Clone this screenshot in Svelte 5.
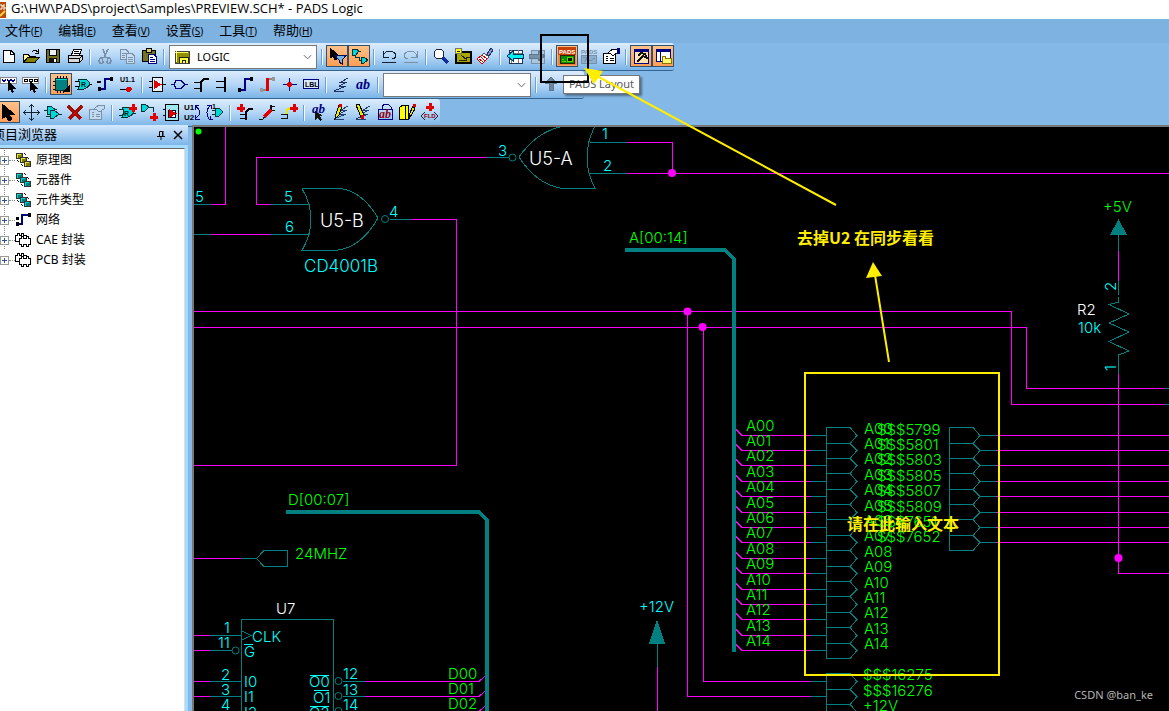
<script>
  const navy = '#000080';
  const teal = '#008080';
  const aqua = '#00d8d8';
  const red = '#e00000';
  const grey = '#7890a8';

  // Shared glyph pieces, all on a 22x22 grid
  const cursor = 'M10 8V18L12 16L14 20L16 19L14.500 15.500H18Z';
  const gate = 'M6 6H12Q17 7 18 11Q16 15 12 16H6L8 11Z';
  const pencil = 'M5 18L6 13L9 4L12 5L9 14Z';
  const plusSmall = 'M13 7H21M17 3V11';
  const slopes = 'M18 5L11 9H17L9 13H16L4 18H14';

  // Each shape is [path, fill, stroke, width] or { text, x, y, size, color }
  const icons = {
    new: [['M5.500 5.500H13L16.500 9V17.500H5.500Z', '#fff', '#000'], ['M12.500 5.500V9.500H16.500', 'none', '#000']],
    open: [['M3.500 17V9.500H8L9.500 11H15V13', '#fff899', '#000'], ['M3.500 17.500L7.500 12.500H19L15 17.500Z', '#808000', '#000'], ['M12 7Q15 3 17.500 7M18 4V8H15', 'none', '#000']],
    save: [['M4.500 4.500H17.500V17.500H4.500Z', '#707020', '#000'], ['M7.500 4.500H14.500V10.500H7.500Z', '#e8f0f8', '#000'], ['M7 13H15V18H7Z', '#111', 'none'], ['M12 14H14V17H12Z', '#fff', 'none']],
    print: [['M7.500 10L9.500 4.500H17.500L15.500 10Z', '#fff', '#000'], ['M4.500 10.500H18.500V14.500L15.500 17.500H4.500Z', '#d8d8d8', '#000'], ['M10 6.500H15M9.500 8.500H14.500M4.500 13.500H15.500M15.500 17.500V13.500L18.500 10.500', 'none', '#000']],
    cut: [['M9 4L12 13M14 4L10 13', 'none', grey, 1.5], ['M8 13A2 3 0 1 0 9 17ZM14 13A2 3 0 1 1 13 17Z', 'none', grey, 1.5]],
    copy: [['M4.500 4.500H10L12.500 7V14.500H4.500Z', '#c6def4', grey], ['M10.500 8.500H16L18.500 11V18.500H10.500Z', '#c6def4', grey], ['M6 8.500H10M6 10.500H9M6 12.500H9M12 12.500H17M12 14.500H17M12 16.500H17', 'none', grey]],
    paste: [['M4.500 5.500H17.500V16.500H4.500Z', '#747424', '#000'], ['M8.500 3.500H13.500V7.500H8.500Z', '#d8c860', '#000'], ['M10.500 9.500H16L18.500 12V18.500H10.500Z', '#fff', navy], ['M12 12.500H15M12 14.500H17M12 16.500H17', 'none', navy]],
    board: [['M4 5H18V17H4Z', '#909000', '#404040'], ['M4 6H17M5 5V16', 'none', '#ffff60'], ['M8 17V11H17V17M11 17V14H14V17', '#ffff40', '#222']],
    filter: [['M4 3V13L7 11L9 15L11 14L9 10H12Z', '#000', '#000'], ['M9 10.500H20L16 15V19L13 17V15Z', '#78b0e8', '#001050']],
    gates: [['M4 4H8L11 6L8 10H4Z', aqua, '#033'], ['M13 12H16L20 15L16 18H13Z', aqua, '#033'], ['M7 10V12.500H11V15H13M11 6.500H13', 'none', '#033']],
    undo: [['M5 6V12H11M5 12Q6 6 12 6Q18 7 18 11Q17 14 14 14', 'none', '#123'], ['M4 17.500H18', 'none', '#123']],
    redo: [['M17 6V12H11M17 12Q16 6 10 6Q4 7 4 11Q5 14 8 14', 'none', grey], ['M4 17.500H18', 'none', grey]],
    magnify: [['M9 4A5 5 0 1 1 9 14A5 5 0 1 1 9 4Z', '#fff', '#223'], ['M13 13L18 18', 'none', '#1030a0', 3]],
    boardZoom: [['M4 6.500H19V18H4Z', '#a8a800', '#000', 2], ['M7 15H14V12H18M9 10L15 15', 'none', '#222'], ['M3.500 3.500H9.500V8.500H3.500Z', '#ffff00', '#777'], ['M5 6H8', 'none', '#222']],
    brush: [['M13 9L17 3L19 5L15 11Z', '#9099c8', '#203070'], ['M10 8L15 12L13 14L8 10Z', '#fff', '#555'], ['M8 10L3 14L8 19L13 14Z', '#fff', red], ['M5.500 14L9 17M7 12L11 16', 'none', red]],
    importLeft: [['M5.500 5.500H18.500V18.500H5.500Z', '#fff', '#235'], ['M5 8.500H18M7.500 5V18M14.500 5V18', 'none', '#777'], ['M3 11L9 6V9H19V13H9V16Z', '#00f0f0', '#013060']],
    exportRight: [['M5.500 5.500H18.500V18.500H5.500Z', '#a9c6df', grey], ['M3 9H12V6L19 11L12 16V13H3Z', grey, '#60788e']],
    pads: [['M2 2H20V20H2Z', '#f08040', 'none'], ['M2 2H20V10H2Z', '#c84000', 'none'], ['M4.500 10.500H18.500V18.500H4.500Z', '#009000', '#302000'], ['M6 14H8M6 16.500H10M11 12H16V16H11Z', '#111', '#60d000'], { text: 'PADS', x: 3, y: 9, size: 6, color: '#fff' }],
    padsOff: [['M3.500 10.500H18.500V18.500H3.500Z', '#8aafd2', grey], ['M5 13L8 12L12 16L17 13M6 17L10 12', 'none', grey], { text: 'PADS', x: 3, y: 9, size: 6, color: grey }],
    props: [['M3.500 8.500H15.500V18.500H3.500Z', '#fff', '#000'], ['M6 11.500H8M6 13.500H8M6 15.500H8M10 13.500H14M10 15.500H14', 'none', '#000'], ['M8 8L12 4.500H17V8L13 11L11 9Z', '#fff', '#000'], ['M17 3H20V9H17Z', navy, 'none']],
    propsOff: [['M3.500 8.500H15.500V18.500H3.500Z', '#c2dbf1', grey], ['M6 11.500H8M6 13.500H8M6 15.500H8M10 13.500H14M10 15.500H14', 'none', grey], ['M8 8L12 4.500H18V8L13 11L11 9Z', '#c2dbf1', grey]],
    hammer: [['M4.500 4.500H18.500V18.500H4.500Z', '#ffe2ad', navy], ['M4 5.500H19', 'none', navy, 3], ['M8 11L11 8L15 9L17 13L13 11L7 17', 'none', '#111', 2]],
    explorer: [['M4.500 4.500H18.500V16.500H4.500Z', '#fff', navy], ['M4 5.500H19', 'none', navy, 3], ['M8.500 5V17', 'none', navy], ['M10.500 11.500H13L14 13.500H19.500V18.500H10.500Z', '#ffff70', '#907000']],
    selectNets: [['M2.500 4.500H18.500V10.500H2.500Z', '#fff', '#888'], ['M4 6L6 9L8 6M9 6L11 9L13 6M13 6L15 9L17 6', 'none', navy], [cursor, '#000', 'none']],
    selectParts: [['M2.500 4.500H18.500V10.500H2.500Z', '#fff', '#888'], ['M4.500 6.500H7.500V8.500H4.500ZM9.500 6.500H12.500V8.500H9.500ZM14.500 6.500H17.500V8.500H14.500Z', 'none', '#000'], [cursor, '#000', 'none']],
    chip: [['M5.500 5.500H17.500V17.500H5.500Z', teal, '#033'], ['M6 6.500H17', 'none', aqua], ['M7.500 5V3M10.500 5V3M13.500 5V3M16.500 5V3M7.500 20V18M10.500 20V18M13.500 20V18M5 8.500H3M5 12.500H3M5 16.500H3', 'none', '#000'], ['M17 18H14L19 13V18Z', '#000', '#000']],
    gateR: [[gate, aqua, '#003030'], ['M3 8.500H7M3 13.500H7M18 11.500H20', 'none', '#000'], { text: 'R', x: 9, y: 14, size: 7, color: '#002020' }],
    net: [['M3 9H7M5 16H11V6H17', 'none', navy, 2], ['M5 14V18M17 4V8M4 8V10', 'none', '#000', 3]],
    pinNumber: [{ text: 'U1.1', x: 4, y: 9, size: 7, color: '#000' }, ['M4 16.500H12', 'none', '#000'], ['M11 14H14L15.500 15.500V17L14 19H11L10 17V15Z', red, 'none']],
    part: [['M6.500 4.500H16.500V18.500H6.500Z', '#e4f0fc', '#000'], ['M3 8.500H7M3 14.500H7M16 11.500H20M9 4.500H14', 'none', '#000'], ['M8 7L16 11.500L8 16Z', red, 'none']],
    port: [['M3 11.500H6L8 7.500H13L17 11.500L13 15.500H8L6 11.500M17 11.500H20', 'none', navy]],
    bus: [['M4 9.500H11M4 15.500H11', 'none', '#000'], ['M11 19V9L14 6H19', 'none', '#000', 2]],
    busTap: [['M4 8.500H12M4 14.500H12', 'none', '#000'], ['M13 4V19', 'none', '#000', 2]],
    segment: [['M5 17H11V6H17', 'none', navy, 2], ['M5 15V19M17 4V8', 'none', '#000', 3]],
    segmentRed: [['M4 17H10M12 6H17', 'none', '#888', 2], ['M11 5V18', 'none', red, 3], ['M5 15V19M17 4V8', 'none', '#999', 3]],
    junction: [['M5 11.500H19M11.500 5V18', 'none', navy], ['M10 9H13V14H10ZM9 10H14V13H9Z', red, 'none']],
    label: [['M3.500 6.500H18.500V15.500H3.500Z', '#d8eafa', navy], { text: 'LBL', x: 5, y: 14, size: 7, color: '#000' }],
    line: [[slopes, 'none', '#203060']],
    ab: [{ text: 'ab', x: 4, y: 16, size: 14, color: navy, serif: true }],
    up: [['M9 17V10H6L11 4L16 10H13V17Z', '#71869b', '#60788c']],
    arrow: [['M4 3V18L8 15L11 20L14 18L11 13H16Z', '#000', '#000']],
    move: [['M11.500 4V19M4 11.500H19', 'none', '#123'], ['M9 6L11.500 3.500L14 6M9 17L11.500 19.500L14 17M6 9L3.500 11.500L6 14M17 9L19.500 11.500L17 14', 'none', '#123']],
    dupGate: [['M5 5H8L13 8L9 13H5Z', aqua, '#033'], ['M8 9H12L17 13L12 17H8Z', aqua, '#033'], ['M2 9.500H5M4 15.500H8M13 8.500H15M17 13.500H20', 'none', '#033']],
    remove: [['M4 5L17 18M18 5L5 18', 'none', '#921000', 3], ['M4 5L17 18M18 5L5 18', 'none', red]],
    addPart: [[gate, aqua, '#033'], ['M3 8.500H7M3 14.500H7M18 12.500H20', 'none', '#033'], [plusSmall, 'none', red, 3], { text: 'R', x: 8, y: 15, size: 7, color: '#022' }],
    addNet: [['M3 3H7L11 6L7 10H3Z', aqua, '#033'], ['M11 6.500H15.500V11', 'none', '#033'], ['M12 16H20M16 12V20', 'none', red, 3]],
    swapPart: [['M5.500 3.500H18.500V19.500H5.500Z', '#9ee9ed', '#000'], ['M3 8.500H6M3 14.500H6M8.500 9.500H15.500V16.500H8.500Z', '#fff', '#003'], ['M9 8L17 12.500L9 17Z', red, 'none']],
    swapRef: [{ text: 'U1', x: 2, y: 9, size: 8, color: '#000' }, { text: 'U2', x: 2, y: 19, size: 8, color: '#000' }, ['M13 5Q19 8 17 14L13 18M13 9V4H17M13 14V18H18', 'none', navy]],
    swapPin: [['M7 4Q0 10 5 18M3 4H7V8M5 18H9M6 15V18', 'none', navy], ['M11 7H15L19 11L15 15H11Z', aqua, '#033'], ['M8 9.500H11M8 13.500H11', 'none', '#033'], { text: '1', x: 8, y: 8, size: 7, color: '#000' }],
    addBus: [['M3 7H11M7 3V11', 'none', red, 3], ['M6 13.500H11M6 17.500H12', 'none', '#000'], ['M12 19V11L15 8H19', 'none', '#000', 2]],
    cutBus: [['M3 18H7L9 15M14 9L15 4V11M15 5H19M15 9H19', 'none', '#111'], ['M8 16L15 9', 'none', red, 3]],
    splitBus: [['M3 13.500H9M3 17.500H9V13', 'none', '#111'], ['M9 13V9L12 7H15', 'none', '#e8e800', 2], ['M12 7H20M16 3V11', 'none', red, 3]],
    abCursor: [{ text: 'ab', x: 4, y: 12, size: 13, color: navy, serif: true }, ['M7 10V19L10 17L12 20L14 19L12 15H15Z', '#111', 'none']],
    drawPencil: [[slopes, 'none', '#20406c'], [pencil, '#e8e800', '#000'], ['M9 3H12V6H9Z', red, 'none']],
    editPencil: [[slopes, 'none', '#20406c'], ['M4 4L7 3L12 14L9 16Z', '#e8e800', '#000'], ['M9 14H12V18H9Z', red, 'none']],
    lockText: [['M8 9V5L11 3H14L17 6V9M4.500 8.500H18.500V18.500H4.500Z', 'none', navy], { text: 'ab', x: 5, y: 17, size: 12, color: '#900010', serif: true }],
    library: [['M3.500 6.500L6 4.500H9.500V18.500H3.500Z', '#ffff00', '#000'], ['M9.500 4.500H12.500V18.500H9.500Z', '#ffff00', '#000'], ['M17 5L13 14V18L19 8Z', '#e8e800', '#000'], ['M17 3H20V6H17Z', red, 'none']],
    field: [['M8 6H16M12 2V10', 'none', red, 3], ['M7 11L3 15L7 19M16 11L20 15L16 19', 'none', '#302020'], { text: 'FLD', x: 6, y: 17, size: 6, color: '#900010' }]
  };

  const standardBar = ['new', 'open', 'save', 'print', '|', 'cut', 'copy', 'paste', '|', 'layers', '|', 'filter*', 'gates*', '|',
    'undo', 'redo', '|', 'magnify', 'boardZoom', 'brush', '|', 'importLeft', 'exportRight', '|', 'pads*', 'padsOff', 'props', '|', 'hammer*', 'explorer*'];
  const filterBar = ['selectNets', 'selectParts', '|', 'chip*', 'gateR', 'net', 'pinNumber', '|', 'part', 'port', 'bus', 'busTap',
    'segment', 'segmentRed', 'junction', 'label', '|', 'line', 'ab', '|', 'find', '|', 'up', 'blank'];
  const editBar = ['arrow*', 'move', 'dupGate', 'remove', 'propsOff', '|', 'addPart', 'addNet', 'swapPart', 'swapRef', 'swapPin', '|',
    'addBus', 'cutBus', 'splitBus', '|', 'abCursor', 'drawPencil', 'editPencil', 'lockText', 'library', 'field'];

  const menus = [['文件', 'F'], ['编辑', 'E'], ['查看', 'V'], ['设置', 'S'], ['工具', 'T'], ['帮助', 'H']];

  const sheet = 'M1.500 1.500H7.500V6.500H1.500Z';
  const tree = [
    { name: '原理图', color: '#808000', light: '#e8e840' },
    { name: '元器件', color: teal, light: aqua },
    { name: '元件类型', color: teal, light: aqua },
    { name: '网络', net: true },
    { name: 'CAE 封装', outline: true },
    { name: 'PCB 封装', outline: true }
  ];

  // Address lines share one pitch on both connectors
  const pitch = 15.38;
  const rowY = (i) => Math.floor(435.2 + i * pitch) + 0.5;
  const topY = (i) => Math.floor(427.7 + i * pitch) + 0.5;
  const address = Array.from({ length: 15 }, (_, i) => ({ y: rowY(i), label: 'A' + String(i).padStart(2, '0') }));
  const nets = ['5799', '5801', '5803', '5805', '5807', '5809', '7651', '7652'];
  const tab = (x, i) => `M${x + 0.5} ${topY(i + 1)}V${topY(i)}H${x + 24}L${x + 31} ${rowY(i)}L${x + 24} ${topY(i + 1)}H${x}`;

  const wires = [
    'M225.5 127V204.5H211', 'M211 234.5H271', 'M487 157.5H256.5V204.5H271',
    'M411 219.5H456.5V465.5H194', 'M194 311.5H1011.5V404.5H1165', 'M194 327.5H1026.5V388.5H1165',
    'M627 142.5H672.5V173.5', 'M627 173.5H3000', 'M687.5 311V696.5H811', 'M703.5 327V681.5H811',
    'M194 558.5H241', 'M194 635.5H210', 'M194 650.5H210', 'M194 681.5H210', 'M194 696.5H210',
    'M365 681.5H479L485 676', 'M365 696.5H479L485 691', 'M365 711.5H479L485 706',
    'M1118.5 251V281', 'M1118.5 374V573.5H3000', 'M657.5 667V3000'
  ];

  const parts = [
    'M194 204.5H211M194 234.5H211M271 204.5H310M271 234.5H310',
    'M302 188.5H340Q362 191 378 218Q362 247 336 250.5H302Q320 219 302 188.5',
    'M390 219.5H411M487 157.5H509',
    'M565 126Q538 130 519 157Q536 184 562 188.5H595Q579 157 595 126M590 142.5H627M590 173.5H627',
    'M241 558.5H256.5L264 550.5H287.5V566.5H264L256.5 558.5',
    'M241.5 3000V619.5H333.5V3000M210 635.5H241M210 650.5H232M210 681.5H241M210 696.5H241M242 631L251 635.5L242 640',
    'M343 681.5H365M343 696.5H365M343 711.5H365',
    'M1118.5 235V251M1118.5 281V295M1118.5 297V302L1109 304.5L1129 314L1109 323L1129 332L1109 341.5L1129 351L1118.5 355V374',
    'M657.5 643V667M811 681.5H826M811 696.5H826M1165 388.5H1169M1165 404.5H1169',
    'M826.5 3000V673.5H850L857 681.5L850 689.5H826M850 689.5L857 696.5L850 704.5H826M850 704.5L857 712'
  ];
  // Inverting pins
  const bubbles = [[385, 219], [512.5, 157.5], [235.5, 650.5], [338.5, 681], [338.5, 696], [338.5, 711]];

  const cyanText = [
    ['5', 195, 202], ['5', 284, 202], ['6', 285, 232], ['4', 389, 217], ['3', 498, 156], ['1', 602, 139], ['2', 603, 171],
    ['1', 224, 633], ['11', 218, 648], ['2', 221, 680], ['3', 221, 695], ['4', 221, 710],
    ['CLK', 252, 642], ['G', 244, 657], ['I0', 244, 687], ['I1', 244, 702], ['I2', 244, 718],
    ['O0', 309, 687], ['O1', 313, 703], ['O2', 309, 718], ['12', 343, 679], ['13', 343, 695], ['14', 343, 710],
    ['10k', 1078, 333], ['+12V', 639, 612]
  ];
  const greenText = [
    ['A[00:14]', 629, 243], ['D[00:07]', 288, 505], ['24MHZ', 295, 559], ['D00', 448, 679], ['D01', 448, 694], ['D02', 448, 709],
    ['+5V', 1103, 212], ['$$$16275', 863, 680], ['$$$16276', 863, 696], ['+12V', 863, 711]
  ];
  const dots = [[672, 173], [687.5, 311.5], [702.5, 327], [1118.5, 558]];

  let layer = 'LOGIC';
  let query = '';
</script>

{#snippet icon(name)}
  <svg class="icon" viewBox="0 0 22 22" aria-hidden="true">
    {#each icons[name] ?? [] as shape}
      {#if shape.text}
        <text class:serif={shape.serif} x={shape.x} y={shape.y} font-size={shape.size} fill={shape.color}>{shape.text}</text>
      {:else}
        <path d={shape[0]} fill={shape[1]} stroke={shape[2]} stroke-width={shape[3] ?? 1} />
      {/if}
    {/each}
  </svg>
{/snippet}

{#snippet chevron()}
  <svg class="chevron" viewBox="0 0 10 6" aria-hidden="true"><path d="M1 1L5 5L9 1" /></svg>
{/snippet}

{#snippet toolbar(items, label)}
  <div class="bar-row">
    <div class="bar" role="toolbar" aria-label={label}>
      {#each items as item}
        {#if item === '|'}
          <span class="sep"></span>
        {:else if item === 'layers'}
          <div class="combo with-icon">
            {@render icon('board')}
            <select bind:value={layer} aria-label="Layer">
              <option>LOGIC</option>
            </select>
            {@render chevron()}
          </div>
        {:else if item === 'find'}
          <div class="combo">
            <input type="text" bind:value={query} aria-label="Find" />
            {@render chevron()}
          </div>
        {:else}
          <button class="tool" class:active={item.endsWith('*')} aria-label={item.replace('*', '')}>
            {@render icon(item.replace('*', ''))}
          </button>
        {/if}
      {/each}
    </div>
  </div>
{/snippet}

<div class="app">
  <header class="title">
    <svg class="logo" viewBox="0 0 7 16" aria-hidden="true">
      <path d="M0 0H6V16H0Z" fill="#b84a08" />
      <path d="M0 3H2V7H0M5 3H3V5H5V7H3" stroke="#fff" fill="none" />
      <path d="M0 14L5 9" stroke="#ffd040" stroke-width="2" />
    </svg>
    <span>G:\HW\PADS\project\Samples\PREVIEW.SCH* - PADS Logic</span>
  </header>

  <nav class="menu">
    {#each menus as [name, key]}
      <button>{name}<small>(<u>{key}</u>)</small></button>
    {/each}
  </nav>

  {@render toolbar(standardBar, 'Standard')}
  {@render toolbar(filterBar, 'Selection filter')}
  {@render toolbar(editBar, 'Schematic editing')}

  <main>
    <aside>
      <div class="panel-head">
        <h2>项目浏览器</h2>
        <button aria-label="Pin">
          <svg viewBox="0 0 10 10"><path d="M3.500 6V1.500H6.500V6M7 1V6M1 6.500H9M5 6V10" /></svg>
        </button>
        <button aria-label="Close">
          <svg viewBox="0 0 10 10"><path d="M1 1L9 9M9 1L1 9" stroke-width="1.500" /></svg>
        </button>
      </div>
      <ul class="tree">
        {#each tree as node}
          <li>
            <button class="expand" aria-label="Expand {node.name}">
              <svg viewBox="0 0 9 9"><path d="M2 4.500H7M4.500 2V7" /></svg>
            </button>
            <span class="dotted"></span>
            <svg class="node-icon" viewBox="0 0 16 16" aria-hidden="true">
              {#if node.net}
                <path d="M2 12H7V3H13" fill="none" stroke={navy} stroke-width="2" />
                <path d="M1 6H4M2 10V14M14 1V5" fill="none" stroke="#000" stroke-width="3" />
              {:else if node.outline}
                <path d="M0.500 9.500V3.500H2.500V1.500H4.500V3.500H6.500V1.500H8.500V3.500H11.500V5M0.500 9.500H4M4.500 12.500V6.500H6.500V4.500H8.500V6.500H11.500V4.500H13.500V6.500H15.500V12.500H13.500V14.500H11.500V12.500H8.500V14.500H6.500V12.500Z" fill="#fff" stroke="#000" />
              {:else}
                <g stroke="#333" fill={node.color}>
                  <path d={sheet} />
                  <path d={sheet} transform="translate(4 4)" />
                  <path d={sheet} transform="translate(8 8)" />
                </g>
                <path d="M2 2.500H6M6 6.500H10M10 10.500H14M2.500 2V6M6.500 6V10M10.500 10V14" stroke={node.light} fill="none" />
                <path d="M2 8L4 10M6 12L8 14M9 1L11 3M12 5L14 7" stroke="#111" stroke-dasharray="1 1" />
              {/if}
            </svg>
            {node.name}
          </li>
        {/each}
      </ul>
    </aside>

    <section class="canvas">
      <svg class="sheet" role="img" aria-label="Schematic">
        <!-- the drawing is stored in window coordinates -->
        <g transform="translate(-194 -127)">
          <g class="wire">
            {#each wires as d}<path {d} />{/each}
            {#each address as { y }}<path d="M736 {y - 6}L742 {y}H811" />{/each}
            {#each nets as _, i}<path d="M996 {rowY(i)}H3000" />{/each}
          </g>
          <g class="part">
            {#each parts as d}<path {d} />{/each}
            {#each address as { y }, i}<path d="M811 {y}H826{tab(826, i)}" />{/each}
            {#each nets as _, i}<path d="{tab(949, i)}M980 {rowY(i)}H996" />{/each}
            {#each bubbles as [cx, cy]}<circle {cx} {cy} r="3.500" />{/each}
          </g>
          <g class="bus">
            <path d="M625 250H725L734 259V652" />
            <path d="M286 512H479L487 520V3000" />
          </g>
          <path class="power" d="M1118.5 219L1127 235H1110ZM657 619L665 644H649Z" />
          {#each dots as [cx, cy]}<circle class="dot" {cx} {cy} r="4" />{/each}
          <circle class="origin" cx="198.5" cy="131.5" r="3" />

          <g class="cyan">
            {#each cyanText as [label, x, y]}<text {x} {y}>{label}</text>{/each}
            <text class="value" x="304" y="272">CD4001B</text>
            <text transform="translate(1116 291) rotate(-90)">2</text>
            <text transform="translate(1116 371) rotate(-90)">1</text>
            <path d="M244 644.5H253M310 675.5H329M314 690.5H329M310 706.5H329" />
          </g>
          <g class="green">
            {#each greenText as [label, x, y]}<text {x} {y}>{label}</text>{/each}
            {#each address as { y, label }}
              <text x="746" y={y - 5}>{label}</text>
              <text x="864" y={y - 2}>{label}</text>
            {/each}
            {#each nets as net, i}<text x="877" y={rowY(i) - 1}>$$${net}</text>{/each}
          </g>
          <g class="white">
            <text class="name" x="320" y="227">U5-B</text>
            <text class="name" x="529" y="165">U5-A</text>
            <text x="276" y="614">U7</text>
            <text x="1077" y="315">R2</text>
          </g>
        </g>
      </svg>
      <span class="watermark">CSDN @ban_ke</span>
    </section>
  </main>

  <div class="tooltip" role="tooltip">PADS Layout</div>

  <svg class="notes" aria-hidden="true">
    <rect class="mark" x="541" y="35" width="47" height="47" />
    <rect class="box" x="805" y="373" width="194" height="302" />
    <path class="stroke" d="M836 205L597 76M889 362L875 275" />
    <path class="head" d="M584 68L603 71L594 84ZM873 262L882 276L866 278Z" />
    <text x="797" y="244">去掉U2 在同步看看</text>
    <text x="847" y="530">请在此输入文本</text>
  </svg>
</div>

<style>
  :global(body) {
    margin: 0;
  }

  .app {
    position: relative;
    display: flex;
    flex-direction: column;
    height: 100vh;
    overflow: hidden;
    background: #84b8e6;
    color: #000;
    font: 12px/16px "Noto Sans", "Noto Sans CJK SC", sans-serif;
  }

  button {
    padding: 0;
    border: 0;
    background: none;
    color: inherit;
    font: inherit;
  }

  .title {
    display: flex;
    align-items: center;
    gap: 4px;
    height: 19px;
    background: #fff;
    font: 13px/16px "Open Sans", sans-serif;
    white-space: nowrap;
  }

  .title span {
    padding-bottom: 3px;
  }

  .logo {
    width: 7px;
    height: 16px;
  }

  .menu {
    display: flex;
    align-items: center;
    gap: 16px;
    height: 24px;
    padding-left: 5px;
    background: #7eb2e0;
    font-size: 13px;
  }

  .menu button {
    padding-bottom: 2px;
    white-space: nowrap;
  }

  .menu small {
    font-size: 10px;
  }

  .bar-row {
    display: flex;
    height: 28px;
  }

  .bar {
    display: flex;
    align-items: flex-start;
    box-sizing: border-box;
    height: 28px;
    margin-left: -2px;
    padding-top: 2px;
    border-bottom: 1px solid #36648f;
    border-radius: 0 3px 3px 0;
    background: linear-gradient(#dcecfd, #b4d6f6 50%, #7ab4e8);
  }

  .tool {
    width: 22px;
    height: 22px;
  }

  .tool.active {
    box-shadow: inset 0 0 0 1px #33506c;
    background: linear-gradient(#ffc28a, #ff9c52);
  }

  .icon {
    display: block;
    width: 22px;
    height: 22px;
    shape-rendering: crispEdges;
  }

  .icon text {
    font-family: "Liberation Sans", sans-serif;
    font-weight: bold;
  }

  .icon text.serif {
    font-family: "Liberation Serif", serif;
    font-style: italic;
  }

  .sep {
    width: 2px;
    height: 16px;
    margin: 4px 3px 0;
    background: linear-gradient(90deg, #6f9fcb 50%, #f2f8ff 50%);
  }

  .combo {
    display: flex;
    align-items: center;
    box-sizing: border-box;
    width: 148px;
    height: 24px;
    margin: 0 1px;
    padding: 0 4px;
    border: 1px solid #7a7a7a;
    background: #fff;
  }

  .combo select,
  .combo input {
    flex: 1;
    min-width: 0;
    padding: 0;
    border: 0;
    outline: 0;
    background: none;
    color: #000;
    font: 11px/16px "Noto Sans", sans-serif;
    appearance: none;
  }

  .with-icon {
    padding-left: 1px;
    gap: 4px;
  }

  .chevron {
    width: 9px;
    height: 6px;
    fill: none;
    stroke: #555;
  }

  main {
    display: flex;
    flex: 1;
    min-height: 0;
    margin-top: -2px;
  }

  aside {
    display: flex;
    flex-direction: column;
    flex: none;
    width: 188px;
    margin-right: 4px;
    background: #a5dbff;
  }

  .panel-head {
    display: flex;
    align-items: center;
    gap: 7px;
    height: 20px;
    padding-right: 5px;
    background: linear-gradient(#d5e8fc, #7cb5e9);
  }

  .panel-head h2 {
    flex: 1;
    margin: 0 0 0 -8px;
    padding-bottom: 3px;
    font-size: 13px;
    font-weight: normal;
  }

  .panel-head svg {
    display: block;
    width: 10px;
    height: 10px;
    fill: none;
    stroke: #000;
  }

  .tree {
    flex: 1;
    margin: 3px 3px 0 0;
    padding: 1px 0 0;
    border-top: 1px solid #666;
    border-right: 1px solid #ddd;
    background: #fff;
    list-style: none;
  }

  .tree li {
    display: flex;
    align-items: center;
    height: 20px;
    white-space: nowrap;
    background: linear-gradient(#888 50%, transparent 50%) 4px 0 / 1px 2px repeat-y;
  }

  .tree li:last-child {
    background: none;
  }

  .expand {
    width: 9px;
    height: 9px;
    box-shadow: inset 0 0 0 1px #999;
    background: #fff;
  }

  .expand svg {
    display: block;
    fill: none;
    stroke: #2a4f9c;
  }

  .dotted {
    width: 6px;
    border-top: 1px dotted #888;
  }

  .node-icon {
    width: 16px;
    height: 16px;
    margin-right: 5px;
    shape-rendering: crispEdges;
  }

  .canvas {
    position: relative;
    flex: 1;
    min-width: 0;
    border-top: 2px solid #777;
    border-left: 2px solid #777;
    background: #000;
    overflow: hidden;
  }

  .sheet {
    display: block;
    width: 100%;
    height: 100%;
    shape-rendering: crispEdges;
    font: 300 15px Inter, "Liberation Sans", sans-serif;
  }

  .name {
    font-size: 18px;
  }

  .value {
    font-size: 17px;
  }

  .wire path {
    fill: none;
    stroke: #ff00ff;
  }

  .part path,
  .part circle {
    fill: none;
    stroke: #008080;
  }

  .sheet circle {
    shape-rendering: auto;
  }

  .bus path {
    fill: none;
    stroke: #008080;
    stroke-width: 4;
  }

  .power {
    fill: #008080;
  }

  .dot {
    fill: #ff00ff;
  }

  .origin {
    fill: #00ff00;
  }

  .cyan {
    fill: #00ffff;
  }

  .cyan path {
    stroke: #00ffff;
  }

  .green {
    fill: #00ff00;
  }

  .white {
    fill: #fff;
  }

  .watermark {
    position: absolute;
    right: 16px;
    bottom: 8px;
    color: #b5b5b5;
    font-size: 11px;
  }

  .tooltip {
    position: absolute;
    top: 75px;
    left: 563px;
    padding: 0 5px 1px;
    border: 1px solid #767676;
    background: #fff;
    box-shadow: 2px 2px 2px rgba(0, 0, 0, 0.4);
    color: #575757;
    font-size: 11px;
  }

  .notes {
    position: absolute;
    inset: 0;
    width: 100%;
    height: 100%;
    pointer-events: none;
    font: bold 16px "Noto Sans CJK SC", sans-serif;
    fill: #ffee00;
  }

  .mark {
    fill: none;
    stroke: #000;
    stroke-width: 2;
  }

  .box,
  .stroke {
    fill: none;
    stroke: #ffee00;
    stroke-width: 2;
  }
</style>
